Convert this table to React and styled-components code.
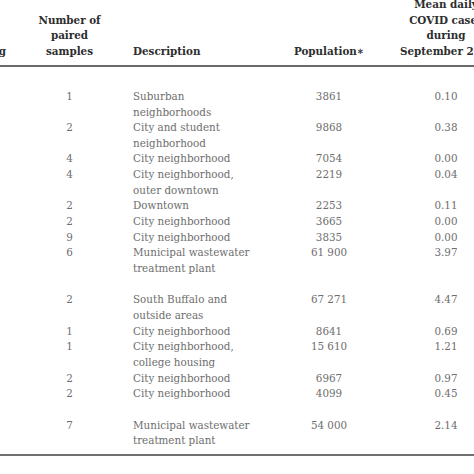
import React from "react";
import styled, { createGlobalStyle } from "styled-components";

const Global = createGlobalStyle`
  html, body { margin: 0; padding: 0; background: #ffffff; }
  body { font-family: "DejaVu Serif", "Liberation Serif", serif; font-stretch: condensed; }
`;

const Frame = styled.div`
  width: 474px;
  height: 474px;
  overflow: hidden;
  background: #fff;
`;

const Table = styled.div`
  margin: -3px 0 0 -80px;
  width: 572px;
  font-size: 11.5px;
  line-height: 15.65px;
`;

const cols = "86px 127px 125px 142px 92px";

const HeadRow = styled.div`
  display: grid;
  grid-template-columns: ${cols};
  align-items: end;
  padding-bottom: 5px;
  border-bottom: 2px solid #6a6a6a;
  color: #2d2d2d;
  font-weight: bold;
`;

const Body = styled.div`
  padding-top: 6.6px;
  padding-bottom: 5px;
  border-bottom: 2px solid #707070;
`;

const Row = styled.div`
  display: grid;
  grid-template-columns: ${cols};
  color: #6e6e6e;
`;

const Spacer = styled.div`
  height: 15.65px;
`;

const Cell = styled.div`
  text-align: ${(p) => p.$align || "center"};
  white-space: nowrap;
`;

const rows = [
  null,
  ["1", ["Suburban", "neighborhoods"], "3861", "0.10"],
  ["2", ["City and student", "neighborhood"], "9868", "0.38"],
  ["4", ["City neighborhood"], "7054", "0.00"],
  ["4", ["City neighborhood,", "outer downtown"], "2219", "0.04"],
  ["2", ["Downtown"], "2253", "0.11"],
  ["2", ["City neighborhood"], "3665", "0.00"],
  ["9", ["City neighborhood"], "3835", "0.00"],
  ["6", ["Municipal wastewater", "treatment plant"], "61 900", "3.97"],
  null,
  ["2", ["South Buffalo and", "outside areas"], "67 271", "4.47"],
  ["1", ["City neighborhood"], "8641", "0.69"],
  ["1", ["City neighborhood,", "college housing"], "15 610", "1.21"],
  ["2", ["City neighborhood"], "6967", "0.97"],
  ["2", ["City neighborhood"], "4099", "0.45"],
  null,
  ["7", ["Municipal wastewater", "treatment plant"], "54 000", "2.14"],
];

const Lines = ({ lines }) =>
  lines.map((l, i) => (
    <React.Fragment key={i}>
      {i > 0 && <br />}
      {l}
    </React.Fragment>
  ));

export default function App() {
  return (
    <>
      <Global />
      <Frame>
        <Table>
          <HeadRow>
            <Cell $align="right">Sampling</Cell>
            <Cell>
              <Lines lines={["Number of", "paired", "samples"]} />
            </Cell>
            <Cell $align="left">Description</Cell>
            <Cell>Population∗</Cell>
            <Cell>
              <Lines lines={["Mean daily", "COVID cases", "during", "September 2020"]} />
            </Cell>
          </HeadRow>
          <Body>
            {rows.map((r, i) =>
              r ? (
                <Row key={i}>
                  <Cell />
                  <Cell>{r[0]}</Cell>
                  <Cell $align="left">
                    <Lines lines={r[1]} />
                  </Cell>
                  <Cell>{r[2]}</Cell>
                  <Cell>{r[3]}</Cell>
                </Row>
              ) : (
                <Spacer key={i} />
              )
            )}
          </Body>
        </Table>
      </Frame>
    </>
  );
}
